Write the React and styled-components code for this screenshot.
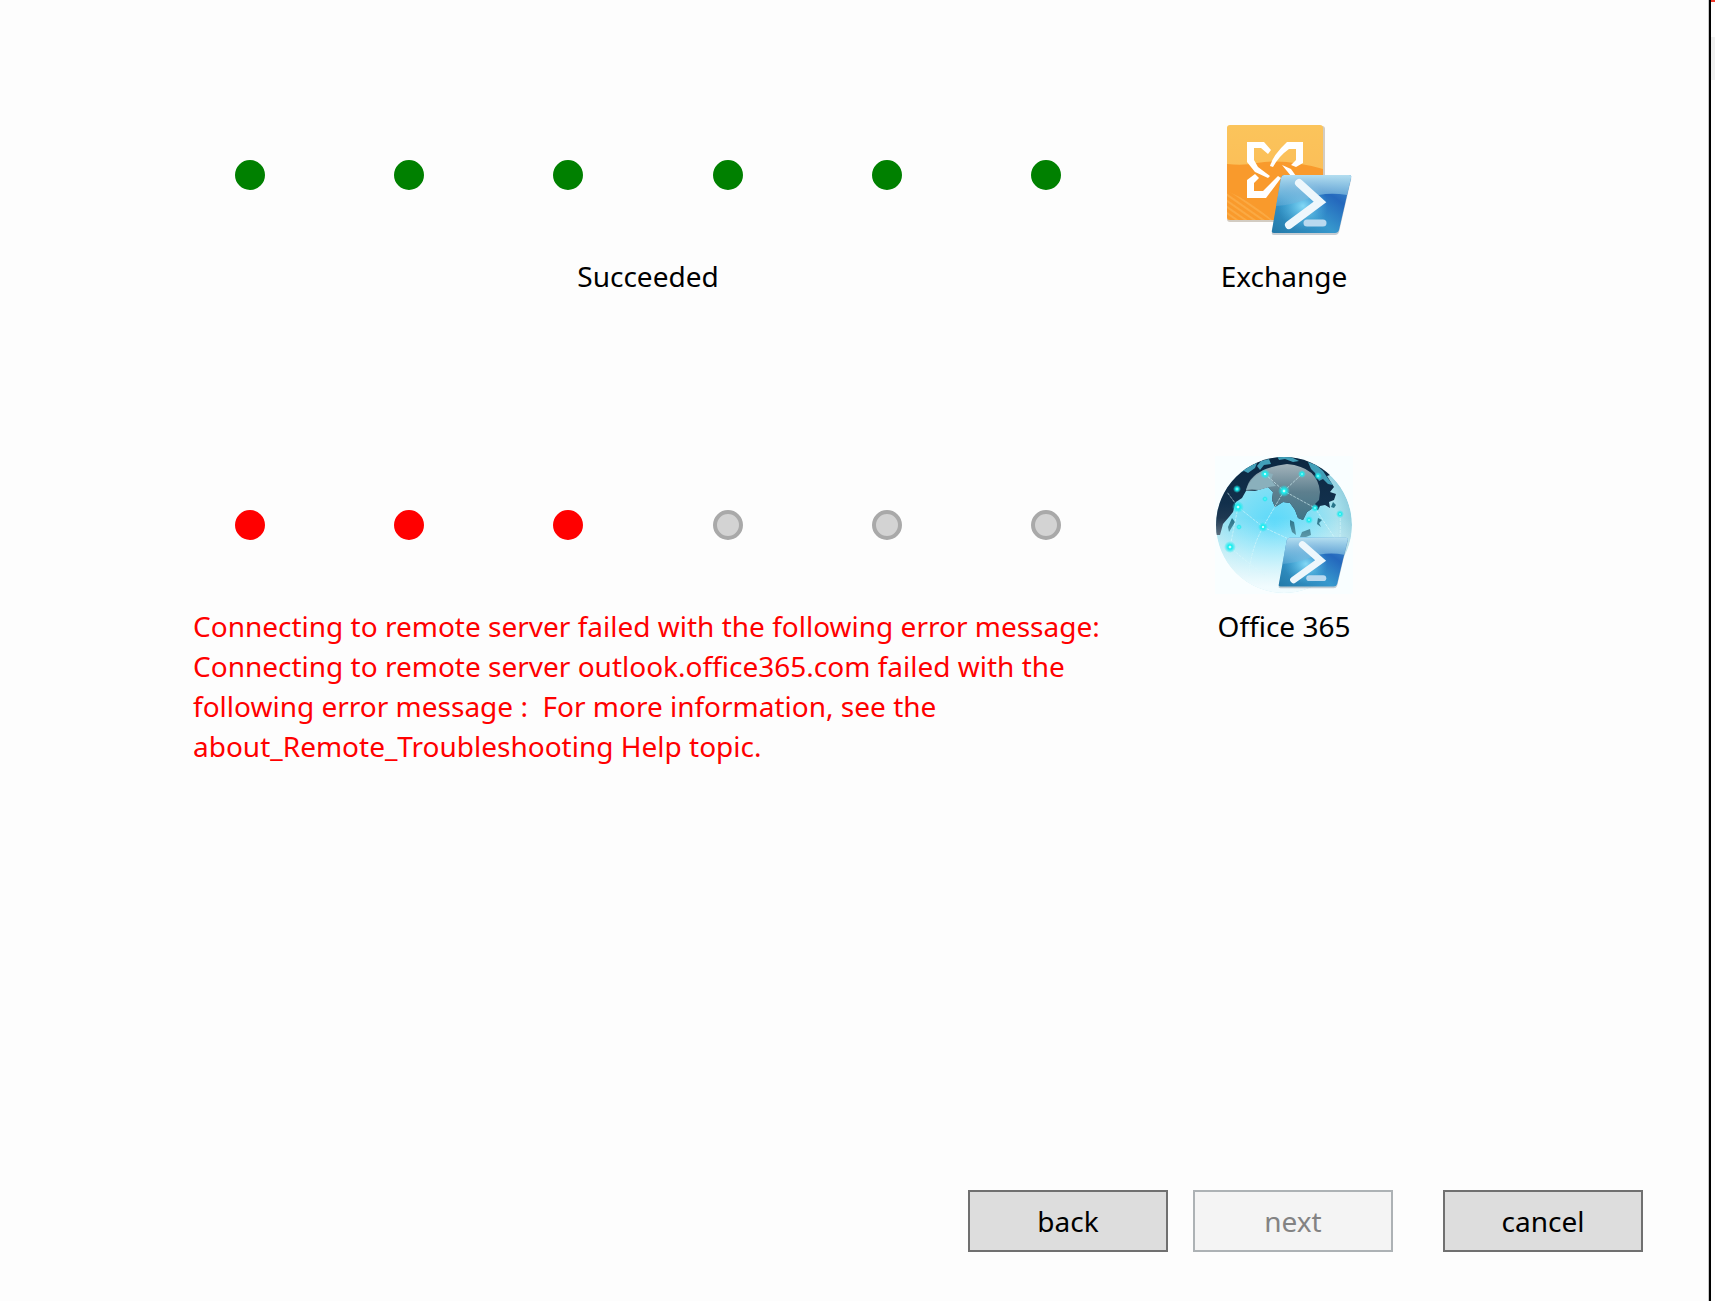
import React from 'react';
import styled, { createGlobalStyle } from 'styled-components';

const GlobalStyle = createGlobalStyle`
  body {
    margin: 0;
    background: #fdfdfd;
  }
`;

const Page = styled.div`
  display: flex;
  min-height: 100vh;
`;

const Window = styled.main`
  box-sizing: border-box;
  flex: 1;
  display: flex;
  flex-direction: column;
  padding: 124px 65px 49px 193px;
  border-right: 1px solid #c8c8c8;
  color: #000;
  font-family: 'Segoe UI', 'Noto Sans', sans-serif;
  font-size: 28px;
  line-height: 40px;
`;

const Edge = styled.div`
  width: 4px;
  border-left: 2px solid #000;
  background: linear-gradient(#f03a2c 2px, #fdfdfd 2px, #fdfdfd 37px, #efefef 37px, #efefef 80px, #fdfdfd 80px);
`;

const Connection = styled.section`
  display: grid;
  grid-template-columns: minmax(0, 910px) 176px;
  column-gap: 93px;
  row-gap: 30px;
  align-content: start;
  height: 350px;
`;

const Dots = styled.div`
  display: flex;
  justify-content: space-between;
  align-items: center;
  height: 102px;
  padding: 0 42px;
`;

const fills = {
  success: '#008000',
  error: '#ff0000',
  pending: '#d3d3d3',
};

const Dot = styled.span`
  box-sizing: border-box;
  width: 30px;
  height: 30px;
  border: 4px solid ${({ state }) => (state === 'pending' ? '#a9a9a9' : fills[state])};
  border-radius: 50%;
  background: ${({ state }) => fills[state]};
`;

const IconBox = styled.div`
  display: flex;
  justify-content: center;
  align-items: center;
  height: 102px;

  svg {
    flex: none;
  }
`;

const Status = styled.p`
  margin: 0;
  text-align: center;
`;

const ErrorMessage = styled.p`
  margin: 0;
  color: #ff0000;
  white-space: pre-wrap;
`;

const ServiceName = styled.div`
  text-align: center;
`;

const Footer = styled.footer`
  display: flex;
  justify-content: flex-end;
  gap: 25px;
  margin-top: auto;
`;

const Button = styled.button`
  box-sizing: border-box;
  width: 200px;
  height: 62px;
  padding: 0;
  border: 2px solid #707070;
  background: #ddd;
  color: #000;
  font: inherit;

  &:disabled {
    border-color: #adb2b5;
    background: #f4f4f4;
    color: #838383;
  }

  &:last-child {
    margin-left: 25px;
  }
`;

const PowerShellDefs = ({ id }) => (
  <>
    <linearGradient id={`${id}-base`} x1="0" y1="1" x2="1" y2="0">
      <stop offset="0" stopColor="#2379a8" />
      <stop offset="0.4" stopColor="#3798cd" />
      <stop offset="0.7" stopColor="#2468bd" />
      <stop offset="1" stopColor="#4d9bd3" />
    </linearGradient>
    <linearGradient id={`${id}-gloss`} x1="0" y1="0" x2="0" y2="1">
      <stop offset="0" stopColor="#b4def0" />
      <stop offset="1" stopColor="#69aed8" stopOpacity="0.5" />
    </linearGradient>
    <radialGradient id={`${id}-glow`}>
      <stop offset="0" stopColor="#8be0fa" stopOpacity="0.9" />
      <stop offset="1" stopColor="#55b9e4" stopOpacity="0" />
    </radialGradient>
  </>
);

const PowerShell = ({ id }) => (
  <>
    <path d="M13 1H78Q81 1 80 4L68 56Q67 59 64 59H3Q0 59 1 56L10 4Q11 1 13 1Z" fill="#5e7182" opacity="0.35" transform="translate(0 2)" />
    <path d="M13 1H78Q81 1 80 4L68 56Q67 59 64 59H3Q0 59 1 56L10 4Q11 1 13 1Z" fill={`url(#${id}-base)`} />
    <ellipse cx="32" cy="32" rx="25" ry="24" fill={`url(#${id}-glow)`} />
    <path d="M13 1H78Q81 1 80 4L76 21Q53 17 36 25Q21 31 5 32L10 4Q11 1 13 1Z" fill={`url(#${id}-gloss)`} />
    <path d="M28 9L49 28L18 51" fill="none" stroke="#eef7fc" strokeWidth="8" strokeLinecap="round" />
    <path d="M36 49H52" stroke="#b9d9ef" strokeWidth="7" strokeLinecap="round" />
  </>
);

const ExchangeIcon = () => (
  <svg width="138" height="138" viewBox="0 0 138 138" aria-hidden="true">
    <defs>
      <linearGradient id="ex-bg" x1="0" y1="0" x2="0" y2="1">
        <stop offset="0" stopColor="#fbc45b" />
        <stop offset="1" stopColor="#fbb955" />
      </linearGradient>
      <pattern id="ex-weave" width="5" height="5" patternUnits="userSpaceOnUse" patternTransform="rotate(35)">
        <path d="M0 1H5" stroke="#fcb95a" strokeWidth="1" />
      </pattern>
      <PowerShellDefs id="ex-ps" />
    </defs>
    <g transform="translate(10 19)">
      <rect x="2" y="1" width="98" height="96" rx="3" fill="#d3ccc2" />
      <rect x="2" y="0" width="96" height="95" rx="3" fill="url(#ex-bg)" />
      <path d="M2 39Q18 41 32 38Q60 33 98 44V92Q98 95 95 95H5Q2 95 2 92Z" fill="#f99a2c" />
      <path d="M2 66Q28 77 47 95H5Q2 95 2 92Z" fill="url(#ex-weave)" />
      <g fill="#fff">
        <path d="M22 17H39L46 25L43 29L36 23H29V35L33 42L45 51L43 53L30 47L22 37Z" />
        <path d="M78 17H62Q48 30 45 41L48 42Q54 31 64 24H71V35L66 40L71 42L78 38Z" />
        <path d="M22 73V55L30 49L34 53L29 58V66H38L53 51L56 53L41 73Z" />
        <path d="M57 40L66 44L71 51L66 51Z" />
      </g>
    </g>
    <g transform="translate(56 68)">
      <PowerShell id="ex-ps" />
    </g>
  </svg>
);

const nodes = [
  [50, 18, 3], [69, 35, 4], [22, 33, 2], [23, 51, 4], [48, 71, 3],
  [15, 91, 4], [100, 52, 2], [87, 18, 2], [103, 20, 2], [125, 58, 2],
  [94, 64, 2], [50, 43, 1], [24, 71, 1],
];

const GlobeIcon = () => (
  <svg width="138" height="138" viewBox="0 0 138 138" aria-hidden="true">
    <defs>
      <linearGradient id="globe-sea" x1="0" y1="0" x2="0" y2="1">
        <stop offset="0" stopColor="#0c2741" />
        <stop offset="0.6" stopColor="#12304c" />
        <stop offset="1" stopColor="#2c4258" />
      </linearGradient>
      <radialGradient id="globe-land" cx="0.43" cy="0.5" r="0.58">
        <stop offset="0" stopColor="#58d8fa" />
        <stop offset="0.45" stopColor="#7edff6" />
        <stop offset="0.8" stopColor="#a9e2ee" />
        <stop offset="1" stopColor="#8fcddd" />
      </radialGradient>
      <linearGradient id="globe-gloss" x1="0" y1="0" x2="0" y2="1">
        <stop offset="0" stopColor="#a3b3bb" />
        <stop offset="0.5" stopColor="#5d7f8e" />
        <stop offset="1" stopColor="#3f7488" />
      </linearGradient>
      <radialGradient id="globe-node">
        <stop offset="0" stopColor="#b8ffff" />
        <stop offset="0.35" stopColor="#17eeee" />
        <stop offset="1" stopColor="#20e8f0" stopOpacity="0" />
      </radialGradient>
      <linearGradient id="globe-fade" x1="0" y1="0" x2="0" y2="1">
        <stop offset="0.45" stopColor="#f5fdff" stopOpacity="0" />
        <stop offset="0.95" stopColor="#f5fdff" stopOpacity="0.95" />
      </linearGradient>
      <clipPath id="globe-clip"><circle cx="69" cy="69" r="68" /></clipPath>
      <PowerShellDefs id="globe-ps" />
    </defs>
    <rect width="138" height="138" fill="#f9feff" />
    <g clipPath="url(#globe-clip)">
      <circle cx="69" cy="69" r="68" fill="url(#globe-land)" />
      <path d="M0 79L5 79L8 68L14 61L18 56L21 46L27 42L31 35L40 35L53 31L58 36L57 44L60 51L68 46L75 47L80 54L83 62L88 64L92 56L98 52L103 54L105 50L110 49L115 52L114 46L119 44L121 38L115 36L119 31L112 20L118 18L100 0H30L0 40Z" fill="url(#globe-sea)" />
      <path d="M31 35Q34 13 72 8Q103 11 105 36L104 44L100 48L103 52L98 52L92 56L88 64L83 62L80 54L75 47L68 46L60 51L57 44L58 36L53 31L43 34Z" fill="url(#globe-gloss)" />
      <path d="M31 34Q35 21 48 16L58 18L56 24L61 30L54 31L44 34L37 33Z" fill="#8ab0bc" />
      <path d="M22 18L34 10L42 7L40 12L33 17L29 15ZM46 5L54 3L56 8L49 9L45 14L42 10ZM62 0L76 1L84 5L78 6L70 3L64 4ZM93 6L101 9L108 15L112 21L118 29L113 28L108 23L104 25L100 17L96 13Z" fill="#429fb8" />
      <path d="M17 62L20 66L17 71L14 76L13 71ZM75 64L79 66L80 72L81 79L77 76L75 69ZM85 81L87 76L95 73L96 79L91 81ZM103 62L107 64L104 67L106 71L102 68ZM118 46L121 49L119 52L116 51Z" fill="#28748a" />
      <rect width="138" height="138" fill="url(#globe-fade)" />
      <path
        d="M50 18L69 35L100 52L125 90M69 35L48 71L23 51L12 36M48 71L80 86M48 71Q35 95 34 120M15 91Q30 105 50 119M69 35L87 18M125 58Q126 75 124 90M23 51L15 91"
        fill="none"
        stroke="#dcf9fc"
        strokeOpacity="0.6"
        strokeDasharray="3 1"
      />
    </g>
    {nodes.map(([x, y, r]) => (
      <g key={`${x}-${y}`}>
        <circle cx={x} cy={y} r={r + 2} fill="url(#globe-node)" />
        {r > 2 && <circle cx={x} cy={y} r="1" fill="#d6ffff" />}
      </g>
    ))}
    <g transform="translate(63 81) scale(0.87 0.84)">
      <PowerShell id="globe-ps" />
    </g>
  </svg>
);

const exchangeDots = ['success', 'success', 'success', 'success', 'success', 'success'];
const officeDots = ['error', 'error', 'error', 'pending', 'pending', 'pending'];

const App = () => (
  <>
    <GlobalStyle />
    <Page>
      <Window>
        <Connection>
          <Dots>
            {exchangeDots.map((state, i) => <Dot key={i} state={state} />)}
          </Dots>
          <IconBox><ExchangeIcon /></IconBox>
          <Status>Succeeded</Status>
          <ServiceName>Exchange</ServiceName>
        </Connection>
        <Connection>
          <Dots>
            {officeDots.map((state, i) => <Dot key={i} state={state} />)}
          </Dots>
          <IconBox><GlobeIcon /></IconBox>
          <ErrorMessage>
            {'Connecting to remote server failed with the following error message: Connecting to remote server outlook.office365.com failed with the following error message :  For more information, see the about_Remote_Troubleshooting Help topic.'}
          </ErrorMessage>
          <ServiceName>Office 365</ServiceName>
        </Connection>
        <Footer>
          <Button type="button">back</Button>
          <Button type="button" disabled>next</Button>
          <Button type="button">cancel</Button>
        </Footer>
      </Window>
      <Edge />
    </Page>
  </>
);

export default App;
